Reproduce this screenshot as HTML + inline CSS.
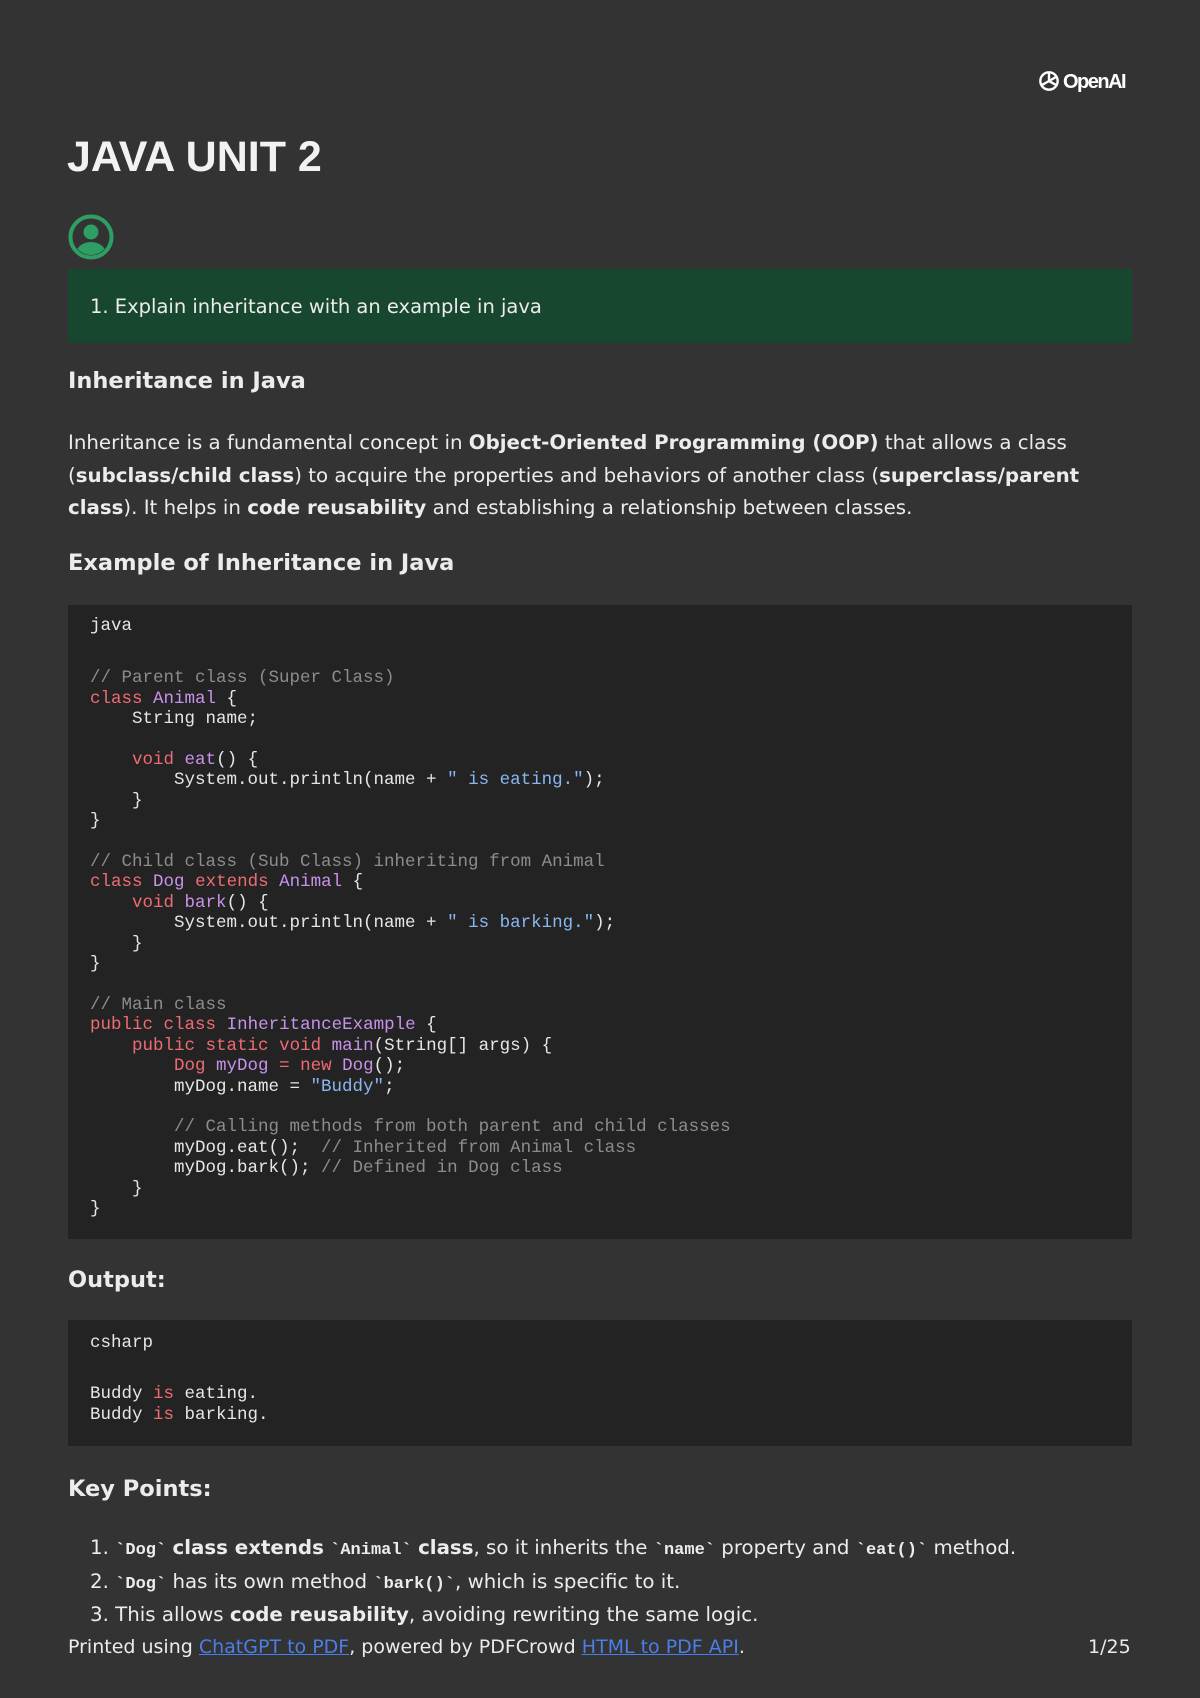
<!DOCTYPE html>
<html><head><meta charset="utf-8"><style>
body{margin:0;background:#333;width:1200px;height:1698px;position:relative;overflow:hidden;font-family:"DejaVu Sans","Liberation Sans",sans-serif;color:#ececec}
.a{position:absolute;white-space:nowrap}
.code{position:absolute;left:68px;width:1064px;background:#232323}
pre{margin:0;font-family:"Liberation Mono",monospace;font-size:17.5px;line-height:20.4px;color:#e6e6e6}
.k{color:#ef6b73}.p{color:#c792ea}.s{color:#89b8f0}.c{color:#8c8c8c}
code{font-family:"Liberation Mono",monospace;font-size:17px;font-weight:bold}
a{color:#4a7ee8;text-decoration:underline}
.h{font-size:22.5px;font-weight:bold}
</style></head><body>
<div class="a" style="left:1036px;top:68px;font-size:20px;font-weight:bold;letter-spacing:-1.5px;color:#fff;font-family:'Liberation Sans',sans-serif"><svg width="26" height="26" viewBox="0 0 24 24" style="vertical-align:-6px;margin-right:1px"><g fill="none" stroke="#fff" stroke-width="2.2"><circle cx="12" cy="12" r="8"/><path d="M12 4v8l7 4M5 16l7-4M12 12l7-4"/></g></svg>OpenAI</div>
<div class="a" style="left:67px;top:133px;font-size:43px;font-weight:bold;color:#f2f2f2;font-family:'Liberation Sans',sans-serif">JAVA UNIT 2</div>
<svg class="a" style="left:68px;top:214px" width="46" height="46" viewBox="0 0 46 46"><defs><clipPath id="cp"><circle cx="23" cy="23" r="18"/></clipPath></defs><circle cx="23" cy="23" r="20.5" fill="none" stroke="#2e9e62" stroke-width="4"/><g clip-path="url(#cp)" fill="#2e9e62"><circle cx="23" cy="18" r="7.5"/><ellipse cx="23" cy="40" rx="15" ry="12"/></g></svg>
<div class="a" style="left:68px;top:269px;width:1064px;height:74px;background:#18472f"></div>
<div class="a" style="left:90px;top:295px;font-size:19.5px">1. Explain inheritance with an example in java</div>
<div class="a h" style="left:68px;top:368px">Inheritance in Java</div>
<div class="a" style="left:68px;top:427px;font-size:19.8px;line-height:32.5px">Inheritance is a fundamental concept in <b>Object-Oriented Programming (OOP)</b> that allows a class<br>(<b>subclass/child class</b>) to acquire the properties and behaviors of another class (<b>superclass/parent</b><br><b>class</b>). It helps in <b>code reusability</b> and establishing a relationship between classes.</div>
<div class="a h" style="left:68px;top:550px">Example of Inheritance in Java</div>
<div class="code" style="top:605px;height:634px"><pre style="padding:11px 0 0 22px">java</pre><pre style="padding:32px 0 0 22px"><span class="c">// Parent class (Super Class)</span>
<span class="k">class</span> <span class="p">Animal</span> {
    String name;

    <span class="k">void</span> <span class="p">eat</span>() {
        System.out.println(name + <span class="s">" is eating."</span>);
    }
}

<span class="c">// Child class (Sub Class) inheriting from Animal</span>
<span class="k">class</span> <span class="p">Dog</span> <span class="k">extends</span> <span class="p">Animal</span> {
    <span class="k">void</span> <span class="p">bark</span>() {
        System.out.println(name + <span class="s">" is barking."</span>);
    }
}

<span class="c">// Main class</span>
<span class="k">public</span> <span class="k">class</span> <span class="p">InheritanceExample</span> {
    <span class="k">public</span> <span class="k">static</span> <span class="k">void</span> <span class="p">main</span>(String[] args) {
        <span class="k">Dog</span> <span class="p">myDog</span> <span class="k">=</span> <span class="k">new</span> <span class="p">Dog</span>();
        myDog.name = <span class="s">"Buddy"</span>;

        <span class="c">// Calling methods from both parent and child classes</span>
        myDog.eat();  <span class="c">// Inherited from Animal class</span>
        myDog.bark(); <span class="c">// Defined in Dog class</span>
    }
}</pre></div>
<div class="a h" style="left:68px;top:1267px">Output:</div>
<div class="code" style="top:1320px;height:126px"><pre style="padding:13px 0 0 22px">csharp</pre><pre style="padding:31px 0 0 22px">Buddy <span class="k">is</span> eating.
Buddy <span class="k">is</span> barking.</pre></div>
<div class="a h" style="left:68px;top:1476px">Key Points:</div>
<div class="a" style="left:90px;top:1533px;font-size:19.8px;line-height:30.5px">1. <code>`Dog`</code> <b>class extends</b> <code>`Animal`</code> <b>class</b>, so it inherits the <code>`name`</code> property and <code>`eat()`</code> method.<br>2. <code>`Dog`</code> has its own method <code>`bark()`</code>, which is specific to it.<br>3. This allows <b>code reusability</b>, avoiding rewriting the same logic.</div>
<div class="a" style="left:68px;top:1636px;font-size:19px">Printed using <a>ChatGPT to PDF</a>, powered by PDFCrowd <a>HTML to PDF API</a>.</div>
<div class="a" style="left:1088px;top:1636px;font-size:19px">1/25</div>
</body></html>
